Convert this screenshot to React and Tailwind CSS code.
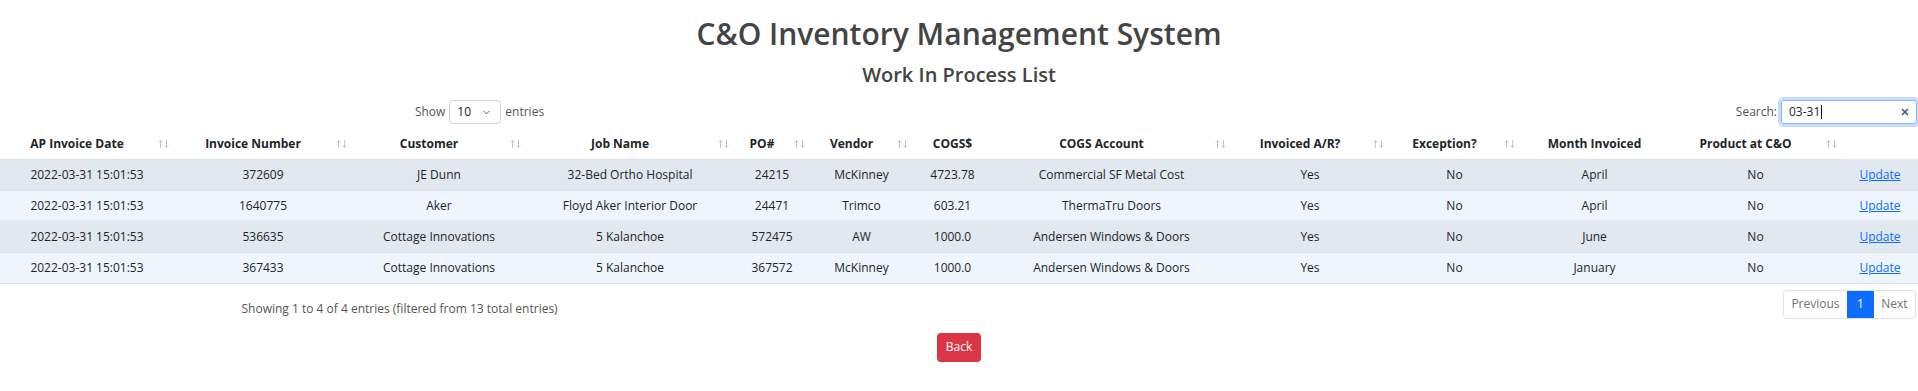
import React from 'react'
import { ChevronDown, X } from 'lucide-react'

const columns = [
  { label: 'AP Invoice Date', w: 'w-[174px]', sort: true },
  { label: 'Invoice Number', w: 'w-[178px]', sort: true },
  { label: 'Customer', w: 'w-[174px]', sort: true },
  { label: 'Job Name', w: 'w-[208px]', sort: true },
  { label: 'PO#', w: 'w-[76px]', sort: true },
  { label: 'Vendor', w: 'w-[103px]', sort: true },
  { label: 'COGS$', w: 'w-[79px]', sort: false },
  { label: 'COGS Account', w: 'w-[239px]', sort: true },
  { label: 'Invoiced A/R?', w: 'w-[158px]', sort: true },
  { label: 'Exception?', w: 'w-[131px]', sort: true },
  { label: 'Month Invoiced', w: 'w-[149px]', sort: false },
  { label: 'Product at C&O', w: 'w-[173px]', sort: true },
  { label: '', w: 'w-[76px]', sort: false },
]

const rows = [
  ['2022-03-31 15:01:53', '372609', 'JE Dunn', '32-Bed Ortho Hospital', '24215', 'McKinney', '4723.78', 'Commercial SF Metal Cost', 'Yes', 'No', 'April', 'No'],
  ['2022-03-31 15:01:53', '1640775', 'Aker', 'Floyd Aker Interior Door', '24471', 'Trimco', '603.21', 'ThermaTru Doors', 'Yes', 'No', 'April', 'No'],
  ['2022-03-31 15:01:53', '536635', 'Cottage Innovations', '5 Kalanchoe', '572475', 'AW', '1000.0', 'Andersen Windows & Doors', 'Yes', 'No', 'June', 'No'],
  ['2022-03-31 15:01:53', '367433', 'Cottage Innovations', '5 Kalanchoe', '367572', 'McKinney', '1000.0', 'Andersen Windows & Doors', 'Yes', 'No', 'January', 'No'],
]

function SortIcon() {
  return (
    <svg width="11" height="9" viewBox="0 0 11 9" className="absolute right-[5px] top-1/2 -translate-y-1/2" fill="none" stroke="#c4c8cd" strokeWidth="1">
      <path d="M2.5 8.5V1M0.5 3L2.5 1L4.5 3" />
      <path d="M8.5 0.5V8M6.5 6L8.5 8L10.5 6" />
    </svg>
  )
}

export default function App() {
  return (
    <div className="w-full bg-white font-['Open_Sans',sans-serif] text-[12px] text-[#212529]">
      {/* Titles */}
      <h1 className="pt-[14px] text-center text-[30px] leading-[40px] font-semibold text-[#444]">
        C&amp;O Inventory Management System
      </h1>
      <h2 className="mt-[7px] text-center text-[20px] leading-[28px] font-semibold text-[#444]">
        Work In Process List
      </h2>

      {/* Length + search */}
      <div className="mt-[11px] flex h-[24px] items-center">
        <div className="flex w-1/2 items-center justify-center gap-[4px] text-[#555]">
          <span>Show</span>
          <div className="flex h-[24px] w-[52px] items-center justify-between rounded-[4px] border border-[#ced4da] pl-[7px] pr-[8px] text-[#212529]">
            <span>10</span>
            <ChevronDown size={11} strokeWidth={2} color="#495057" />
          </div>
          <span>entries</span>
        </div>
        <div className="flex w-1/2 items-center justify-end gap-[4px] pr-[1px] text-[#555]">
          <span>Search:</span>
          <div className="flex h-[24px] w-[136px] items-center justify-between rounded-[3px] border border-[#86b7fe] pl-[7px] pr-[6px] text-[#212529] shadow-[0_0_0_3px_rgba(13,110,253,0.25)]">
            <div className="flex items-center">
              <span>03-31</span>
              <span className="ml-px h-[14px] w-px bg-black" />
            </div>
            <X size={10} strokeWidth={4} color="#445a7a" />
          </div>
        </div>
      </div>

      {/* Table */}
      <table className="mt-[5px] w-full table-fixed border-collapse">
        <colgroup>
          {columns.map((c, i) => (
            <col key={i} className={c.w} />
          ))}
        </colgroup>
        <thead>
          <tr>
            {columns.map((c, i) => (
              <th
                key={i}
                className={
                  'relative h-[30px] py-0 text-center font-bold leading-[17px] text-[#212529] ' +
                  (c.sort ? 'pl-[10px] pr-[30px] ' : 'px-[10px] ') +
                  (i < columns.length - 1 ? 'border-b border-[#dee2e6]' : '')
                }
              >
                {c.label}
                {c.sort && <SortIcon />}
              </th>
            ))}
          </tr>
        </thead>
        <tbody>
          {rows.map((r, ri) => (
            <tr key={ri} className={ri % 2 === 0 ? 'bg-[#e2e8f0]' : 'bg-[#eef5fc]'}>
              {r.map((v, ci) => (
                <td key={ci} className="h-[31px] border-b border-[#dee2e6] px-[10px] py-0 text-center leading-[17px] text-[#212529]">
                  {v}
                </td>
              ))}
              <td className="h-[31px] border-b border-[#dee2e6] px-[10px] py-0 text-center leading-[17px]">
                <a href="#" className="text-[#0d6efd] underline">Update</a>
              </td>
            </tr>
          ))}
        </tbody>
      </table>

      {/* Info + pagination */}
      <div className="mt-[6px] flex">
        <div className="w-5/12 pt-[10px] text-center leading-[18px] text-[#555]">
          Showing 1 to 4 of 4 entries (filtered from 13 total entries)
        </div>
        <div className="flex w-7/12 justify-end pr-[2px]">
          <div className="flex h-[29px] overflow-hidden rounded-[4px] border border-[#dee2e6]">
            <span className="flex w-[63px] items-center justify-center text-[#6c757d]">Previous</span>
            <span className="flex w-[27px] items-center justify-center bg-[#0d6efd] text-white">1</span>
            <span className="flex w-[41px] items-center justify-center text-[#6c757d]">Next</span>
          </div>
        </div>
      </div>

      {/* Back */}
      <div className="mt-[14px] flex justify-center pb-[30px]">
        <button className="h-[29px] w-[44px] rounded-[4px] bg-[#dc3545] text-[12px] text-white">Back</button>
      </div>
    </div>
  )
}
